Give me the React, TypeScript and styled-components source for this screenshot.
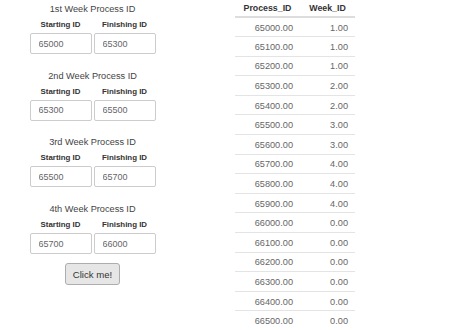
import React from 'react';
import styled, { createGlobalStyle } from 'styled-components';

const weeks = [
  { title: '1st Week Process ID', start: '65000', finish: '65300' },
  { title: '2nd Week Process ID', start: '65300', finish: '65500' },
  { title: '3rd Week Process ID', start: '65500', finish: '65700' },
  { title: '4th Week Process ID', start: '65700', finish: '66000' },
];

const rows: [number, number][] = [
  [65000, 1], [65100, 1], [65200, 1], [65300, 2], [65400, 2], [65500, 3],
  [65600, 3], [65700, 4], [65800, 4], [65900, 4], [66000, 0], [66100, 0],
  [66200, 0], [66300, 0], [66400, 0], [66500, 0],
];

const GlobalStyle = createGlobalStyle`
  html, body {
    margin: 0;
    padding: 0;
    background: #ffffff;
    font-family: "Liberation Sans", Arial, sans-serif;
    color: #333333;
  }
`;

const Page = styled.div`
  display: flex;
  width: 474px;
  height: 330px;
  overflow: hidden;
`;

const Sidebar = styled.div`
  width: 185px;
  display: flex;
  flex-direction: column;
  align-items: center;
  padding-top: 3px;
`;

const WeekBlock = styled.div`
  display: flex;
  flex-direction: column;
  align-items: center;
  margin-bottom: 15.7px;
`;

const WeekTitle = styled.div`
  font-size: 9.2px;
  line-height: 12px;
  color: #444444;
`;

const Fields = styled.div`
  display: flex;
  gap: 2px;
  margin-top: 5px;
`;

const Field = styled.div`
  display: flex;
  flex-direction: column;
  align-items: center;
  width: 62px;
`;

const FieldLabel = styled.div`
  font-size: 7.9px;
  font-weight: bold;
  line-height: 10px;
  color: #333333;
`;

const FieldInput = styled.input`
  box-sizing: border-box;
  margin-top: 3px;
  width: 62px;
  height: 21px;
  padding: 0 0 0 8px;
  border: 1px solid #cccccc;
  border-radius: 2px;
  font-family: "Liberation Sans", Arial, sans-serif;
  font-size: 9px;
  color: #666666;
  outline: none;
`;

const ClickButton = styled.button`
  margin-top: -6.7px;
  width: 55px;
  height: 22px;
  padding: 0;
  background: #e6e6e6;
  border: 1px solid #adadad;
  border-radius: 3px;
  font-family: "Liberation Sans", Arial, sans-serif;
  font-size: 9.6px;
  color: #333333;
`;

const TableWrap = styled.div`
  padding-left: 50px;
`;

const DataTable = styled.table`
  border-collapse: collapse;
  font-size: 9.2px;
`;

const HeadCell = styled.th<{ $w: number }>`
  width: ${p => p.$w}px;
  height: 16px;
  padding: 0;
  text-align: center;
  font-size: 8.8px;
  font-weight: bold;
  color: #333333;
  border-bottom: 2px solid #dddddd;
`;

const BodyRow = styled.tr`
  height: 19.6px;
  & + & td {
    border-top: 1px solid #e4e4e4;
  }
`;

const BodyCell = styled.td`
  padding: 1px 7px 0 0;
  text-align: right;
  color: #666666;
  box-sizing: border-box;
`;

const App = () => (
  <>
    <GlobalStyle />
    <Page>
      <Sidebar>
        {weeks.map(w => (
          <WeekBlock key={w.title}>
            <WeekTitle>{w.title}</WeekTitle>
            <Fields>
              <Field>
                <FieldLabel>Starting ID</FieldLabel>
                <FieldInput defaultValue={w.start} />
              </Field>
              <Field>
                <FieldLabel>Finishing ID</FieldLabel>
                <FieldInput defaultValue={w.finish} />
              </Field>
            </Fields>
          </WeekBlock>
        ))}
        <ClickButton>Click me!</ClickButton>
      </Sidebar>
      <TableWrap>
        <DataTable>
          <thead>
            <tr>
              <HeadCell $w={65}>Process_ID</HeadCell>
              <HeadCell $w={55}>Week_ID</HeadCell>
            </tr>
          </thead>
          <tbody>
            {rows.map(([pid, wid]) => (
              <BodyRow key={pid}>
                <BodyCell>{pid.toFixed(2)}</BodyCell>
                <BodyCell>{wid.toFixed(2)}</BodyCell>
              </BodyRow>
            ))}
          </tbody>
        </DataTable>
      </TableWrap>
    </Page>
  </>
);

export default App;
